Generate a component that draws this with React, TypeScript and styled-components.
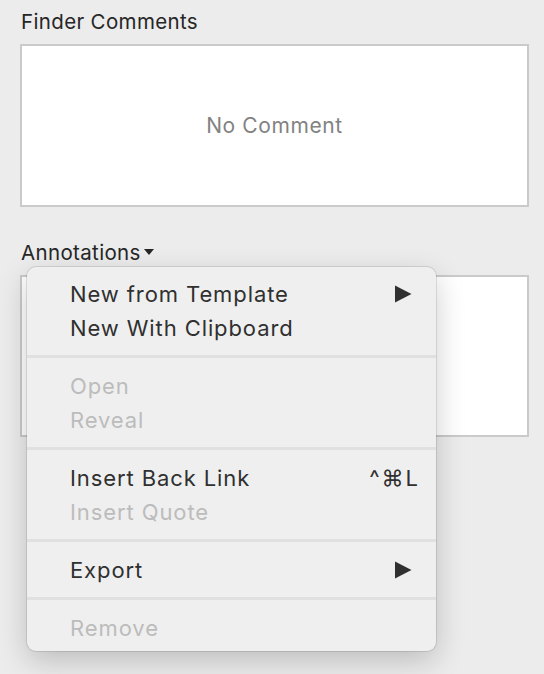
import React from 'react';
import styled, { createGlobalStyle } from 'styled-components';

const GlobalStyle = createGlobalStyle`
  html, body {
    margin: 0;
    padding: 0;
    background: #ececec;
  }
  body {
    font-family: Inter, "Noto Sans", sans-serif;
    -webkit-font-smoothing: antialiased;
  }
`;

const Page = styled.div`
  position: relative;
  width: 544px;
  height: 674px;
  padding: 10px 15px 0 20px;
  box-sizing: border-box;
  overflow: hidden;
  background: #ececec;
`;

const Section = styled.section`
  display: flex;
  flex-direction: column;
  margin-bottom: 34px;
`;

const Label = styled.div`
  display: flex;
  align-items: center;
  height: 24px;
  margin: 0 0 10px 1px;
  color: #262626;
  font-size: 20.5px;
  letter-spacing: 0.35px;
  line-height: 24px;
`;

const Caret = styled.span`
  width: 0;
  height: 0;
  margin: 0 0 2px 3px;
  border-left: 5px solid transparent;
  border-right: 5px solid transparent;
  border-top: 6px solid #262626;
`;

const CommentBox = styled.div<{ $height: number }>`
  display: flex;
  align-items: center;
  justify-content: center;
  height: ${(p) => p.$height}px;
  border: 2px solid #cacaca;
  background: #ffffff;
  box-sizing: border-box;
  color: #828282;
  font-size: 21px;
  letter-spacing: 0.6px;
`;

const Menu = styled.div`
  position: absolute;
  left: 27px;
  top: 267px;
  width: 409px;
  padding: 10px 0 6px;
  box-sizing: border-box;
  background: #efefef;
  border-radius: 9px;
  box-shadow: 0 0 0 1px rgba(0, 0, 0, 0.1), 0 10px 30px rgba(0, 0, 0, 0.2);
`;

const Item = styled.div<{ $disabled?: boolean }>`
  display: flex;
  align-items: center;
  justify-content: space-between;
  height: 34px;
  padding: 0 18px 0 43px;
  color: ${(p) => (p.$disabled ? '#bcbcbc' : '#303030')};
  font-size: 22px;
  letter-spacing: 0.9px;
`;

const Shortcut = styled.span`
  color: #303030;
  letter-spacing: 2px;
  margin-right: -2px;
`;

const Separator = styled.div`
  height: 3px;
  margin: 10px 0 11px;
  background: #e0e0e0;
`;

const SubmenuArrow = () => (
  <svg width="18" height="18" viewBox="0 0 18 18" style={{ marginRight: 6 }} aria-hidden="true">
    <path d="M1 0.5 L17.5 9 L1 17.5 Z" fill="#303030" />
  </svg>
);

const App: React.FC = () => (
  <>
    <GlobalStyle />
    <Page>
      <Section>
        <Label>Finder Comments</Label>
        <CommentBox $height={163}>No Comment</CommentBox>
      </Section>
      <Section>
        <Label>
          Annotations
          <Caret />
        </Label>
        <CommentBox $height={162} />
      </Section>

      <Menu>
        <Item>
          New from Template
          <SubmenuArrow />
        </Item>
        <Item>New With Clipboard</Item>
        <Separator />
        <Item $disabled>Open</Item>
        <Item $disabled>Reveal</Item>
        <Separator />
        <Item>
          Insert Back Link
          <Shortcut>^⌘L</Shortcut>
        </Item>
        <Item $disabled>Insert Quote</Item>
        <Separator />
        <Item>
          Export
          <SubmenuArrow />
        </Item>
        <Separator />
        <Item $disabled>Remove</Item>
      </Menu>
    </Page>
  </>
);

export default App;
